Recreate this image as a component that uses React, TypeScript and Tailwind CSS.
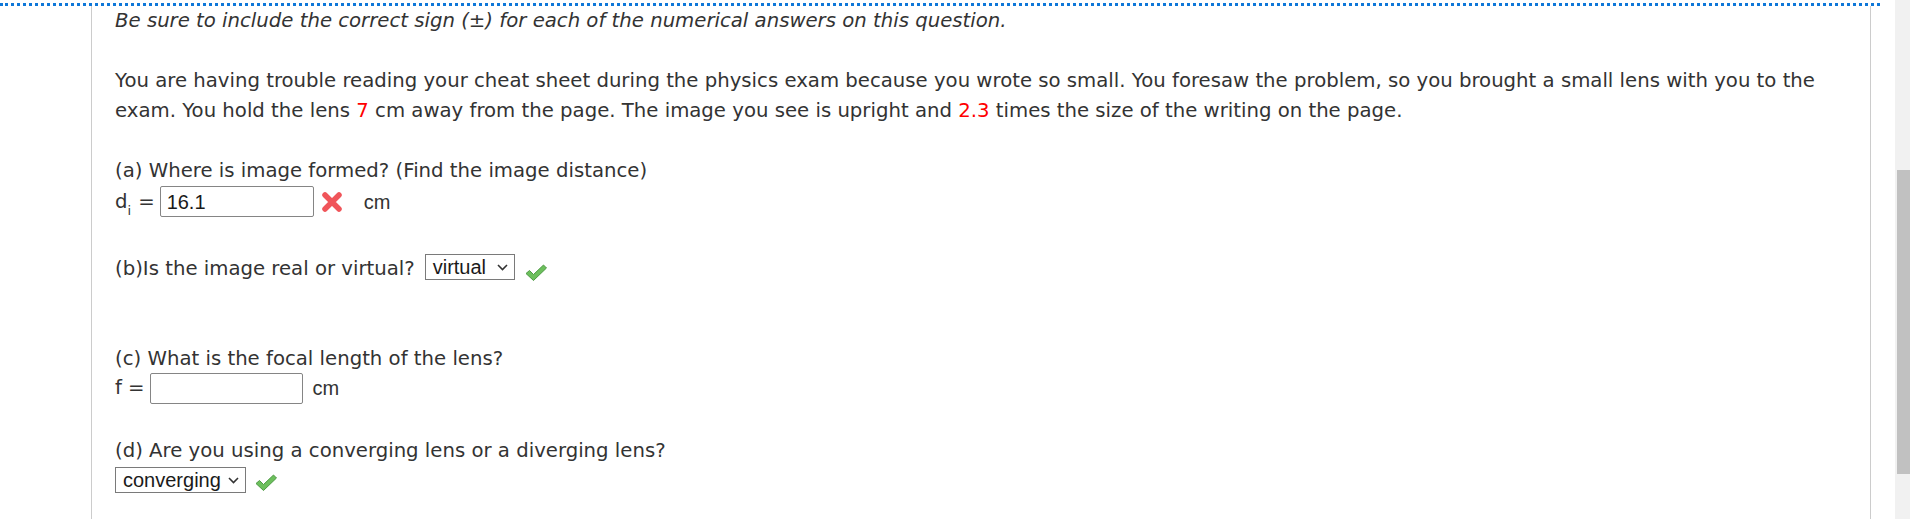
import React from 'react';

const body = { fontFamily: '"DejaVu Sans", Verdana, sans-serif' };
const field = { fontFamily: '"Liberation Sans", Arial, sans-serif' };

function WrongMark() {
  return (
    <svg width="22" height="22" viewBox="0 0 22 22" className="shrink-0">
      <path d="M4 4 L18 18 M18 4 L4 18" stroke="#f0555a" strokeWidth="5.5" strokeLinecap="round" />
    </svg>
  );
}

function RightMark() {
  return (
    <svg width="24" height="19" viewBox="0 0 24 19" className="shrink-0">
      <path
        d="M2 10.5 L5.5 7.5 L9.5 11.5 L19.5 2 L22.5 5 L9.5 17.5 Z"
        fill="#6cbf5c"
        stroke="#4d9a44"
        strokeWidth="1"
        strokeLinejoin="round"
      />
    </svg>
  );
}

function Select({ value, width }: { value: string; width: string }) {
  return (
    <div
      className={`${width} h-[26px] flex items-center justify-between border border-[#7a7a7a] bg-white pl-[7px] pr-[6px] text-[20px] text-[#1a1a1a] shrink-0`}
      style={field}
    >
      <span className="leading-none">{value}</span>
      <svg width="11" height="7" viewBox="0 0 11 7">
        <path d="M1 1 L5.5 5.5 L10 1" fill="none" stroke="#333" strokeWidth="1.6" />
      </svg>
    </div>
  );
}

export default function App() {
  return (
    <div className="flex w-full h-[519px] overflow-hidden bg-white">
      <div className="flex-1 flex flex-col">
        {/* focus outline across the top */}
        <div className="mt-[3px] w-[1880px] border-t-[3px] border-dotted border-[#0e77d8]" />

        <div
          className="ml-[91px] w-[1780px] flex-1 border-x border-[#cccccc] px-[23px] text-[19.7px] leading-[30px] text-[#333]"
          style={body}
        >
          <p className="italic">
            Be sure to include the correct sign (±) for each of the numerical answers on this question.
          </p>

          <p className="mt-[30px]">
            You are having trouble reading your cheat sheet during the physics exam because you wrote so small. You foresaw the problem, so you brought a small lens with you to the exam. You hold the lens <span className="text-[#ff0000]">7</span> cm away from the page. The image you see is upright and <span className="text-[#ff0000]">2.3</span> times the size of the writing on the page.
          </p>

          {/* (a) */}
          <p className="mt-[30px]">(a) Where is image formed? (Find the image distance)</p>
          <div className="flex items-center h-[31px]">
            <span>
              d<sub className="text-[13px] align-[-4px]">i</sub>
            </span>
            <span className="ml-[7px]">=</span>
            <div
              className="ml-[5px] w-[154px] h-[31px] flex items-center border border-[#858585] rounded-[2px] bg-white px-[6px] text-[20px] text-[#1a1a1a]"
              style={field}
            >
              16.1
            </div>
            <span className="ml-[7px]">
              <WrongMark />
            </span>
            <span className="ml-[21px] text-[20px]" style={field}>
              cm
            </span>
          </div>

          {/* (b) */}
          <div className="mt-[37px] flex items-start h-[30px]">
            <span>(b)Is the image real or virtual?</span>
            <div className="ml-[10px]">
              <Select value="virtual" width="w-[90px]" />
            </div>
            <span className="ml-[9px] mt-[9px]">
              <RightMark />
            </span>
          </div>

          {/* (c) */}
          <p className="mt-[60px]">(c) What is the focal length of the lens?</p>
          <div className="flex items-center h-[30px] -mt-[1px]">
            <span>f</span>
            <span className="ml-[6px]">=</span>
            <div className="ml-[6px] w-[153px] h-[31px] border border-[#858585] rounded-[2px] bg-white" />
            <span className="ml-[9px] text-[20px]" style={field}>
              cm
            </span>
          </div>

          {/* (d) */}
          <p className="mt-[33px]">(d) Are you using a converging lens or a diverging lens?</p>
          <div className="flex items-start h-[30px] mt-[1px]">
            <Select value="converging" width="w-[131px]" />
            <span className="ml-[8px] mt-[6px]">
              <RightMark />
            </span>
          </div>
        </div>
      </div>

      {/* page scrollbar */}
      <div className="w-[15px] h-full bg-[#f1f1f1] flex flex-col pl-[2px]">
        <div className="h-[170px]" />
        <div className="h-[304px] bg-[#c1c1c1]" />
      </div>
    </div>
  );
}
